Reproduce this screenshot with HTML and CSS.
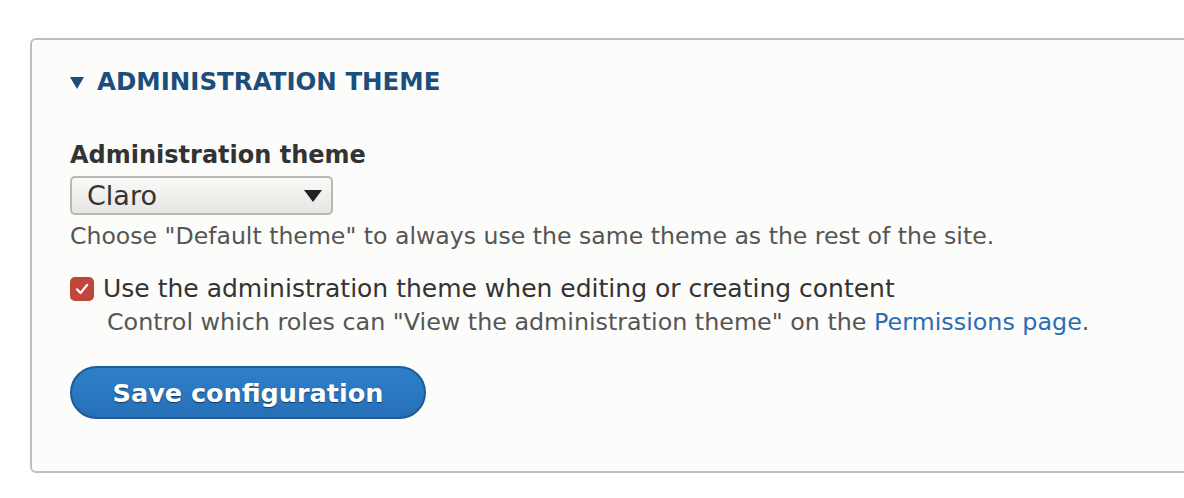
FILE: index.html
```html
<!DOCTYPE html>
<html>
<head>
<meta charset="utf-8">
<link rel="stylesheet" href="styles.css">
</head>
<body>
<div class="page">
  <fieldset class="panel">
    <div class="legend">
      <span class="caret"></span>
      <span class="legend-text">ADMINISTRATION THEME</span>
    </div>
    <div class="field">
      <div class="label">Administration theme</div>
      <div class="select"><span class="select-value">Claro</span><span class="arrow"></span></div>
      <div class="desc">Choose "Default theme" to always use the same theme as the rest of the site.</div>
    </div>
    <div class="check-row">
      <span class="checkbox"><svg width="18" height="18" viewBox="0 0 16 16"><path d="M3.5 8.3 L6.7 11.6 L12.6 4.3" fill="none" stroke="#fff" stroke-width="2" stroke-linecap="round" stroke-linejoin="round"/></svg></span>
      <span class="check-label">Use the administration theme when editing or creating content</span>
    </div>
    <div class="check-desc">Control which roles can "View the administration theme" on the <a href="#" class="link">Permissions page</a>.</div>
    <div class="actions">
      <button class="btn">Save configuration</button>
    </div>
  </fieldset>
</div>
</body>
</html>
```
FILE: styles.css
```css
html, body {
  margin: 0;
  padding: 0;
  background: #ffffff;
  font-family: "DejaVu Sans", "Open Sans", sans-serif;
}
.page {
  padding: 38px 0 0 30px;
}
.panel {
  margin: 0;
  width: 1200px;
  height: 435px;
  box-sizing: border-box;
  border: 2px solid #bfbfbb;
  border-radius: 6px;
  background: #fcfcfa;
  padding: 28px 0 0 38px;
}
.legend {
  display: flex;
  align-items: center;
  height: 28px;
  line-height: 28px;
  color: #1c4e7c;
}
.caret {
  width: 0;
  height: 0;
  border-left: 7px solid transparent;
  border-right: 7px solid transparent;
  border-top: 12px solid #1c4e7c;
  margin-right: 13px;
  margin-top: 2px;
}
.legend-text {
  font-weight: bold;
  font-size: 24.5px;
  letter-spacing: 0;
}
.field {
  margin-top: 45px;
}
.label {
  font-weight: bold;
  font-size: 24px;
  color: #333;
  line-height: 28px;
}
.select {
  margin-top: 7px;
  width: 263px;
  height: 39px;
  box-sizing: border-box;
  border: 2px solid #b8b8b4;
  border-radius: 5px;
  background: linear-gradient(#f9f9f7, #e6e6e3);
  display: flex;
  align-items: center;
  justify-content: space-between;
  padding: 0 9px 0 15px;
}
.select-value {
  font-size: 27px;
  color: #333;
  line-height: 35px;
}
.arrow {
  width: 0; height: 0;
  border-left: 9px solid transparent;
  border-right: 9px solid transparent;
  border-top: 12px solid #222;
}
.desc {
  margin-top: 6px;
  font-size: 23.6px;
  color: #555;
  line-height: 30px;
}
.check-row {
  margin-top: 23px;
  display: flex;
  align-items: center;
  height: 30px;
}
.checkbox {
  width: 24px;
  height: 24px;
  border-radius: 5px;
  background: #c2453a;
  display: flex;
  align-items: center;
  justify-content: center;
  margin-right: 9px;
}
.check-label {
  font-size: 25px;
  color: #333;
  line-height: 30px;
}
.check-desc {
  margin-left: 37px;
  margin-top: 3px;
  font-size: 23.8px;
  color: #555;
  line-height: 30px;
}
.link {
  color: #2a6db5;
  text-decoration: none;
}
.actions {
  margin-top: 29px;
}
.btn {
  width: 356px;
  height: 53px;
  border-radius: 27px;
  border: 2px solid #1e5a94;
  background: linear-gradient(#2e7fc9, #2670b8);
  color: #fff;
  font-family: "DejaVu Sans", "Open Sans", sans-serif;
  font-weight: bold;
  font-size: 25.5px;
  text-shadow: 0 1px 1px rgba(0,0,0,0.5);
  padding: 0;
}
```
